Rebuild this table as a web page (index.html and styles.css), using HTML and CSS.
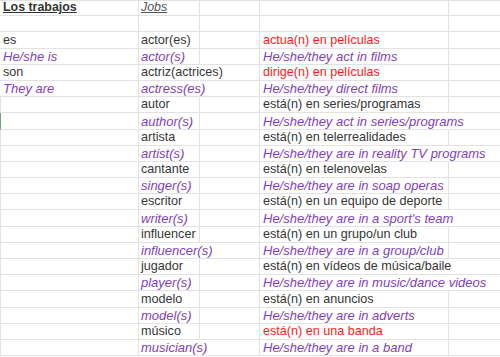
FILE: index.html
```html
<!DOCTYPE html>
<html>
<head>
<meta charset="utf-8">
<link rel="stylesheet" href="styles.css">
</head>
<body>
<div class="sheet">
  <div class="c a top"><span class="title">Los trabajos</span></div><div class="c b top"><span class="sub">Jobs</span></div><div class="c top"></div><div class="c d top"></div><div class="c e top"></div>

  <div class="c a"></div><div class="c b"></div><div class="c"></div><div class="c d"></div><div class="c e"></div>

  <div class="c a">es</div><div class="c b">actor(es)</div><div class="c"></div><div class="c d r">actua(n) en películas</div><div class="c e"></div>
  <div class="c a p">He/she is</div><div class="c b p">actor(s)</div><div class="c"></div><div class="c d p">He/she/they act in films</div><div class="c e"></div>
  <div class="c a">son</div><div class="c b sp">actriz(actrices)</div><div class="c"></div><div class="c d r">dirige(n) en películas</div><div class="c e"></div>
  <div class="c a p">They are</div><div class="c b p sp">actress(es)</div><div class="c"></div><div class="c d p">He/she/they direct films</div><div class="c e"></div>

  <div class="c a edge"></div><div class="c b">autor</div><div class="c"></div><div class="c d">está(n) en series/programas</div><div class="c e"></div>
  <div class="c a edge sel"></div><div class="c b p">author(s)</div><div class="c"></div><div class="c d p sp">He/she/they act in series/programs</div><div class="c e"></div>
  <div class="c a edge"></div><div class="c b">artista</div><div class="c"></div><div class="c d">está(n) en telerrealidades</div><div class="c e"></div>
  <div class="c a edge"></div><div class="c b p">artist(s)</div><div class="c"></div><div class="c d p sp">He/she/they are in reality TV programs</div><div class="c e"></div>
  <div class="c a edge"></div><div class="c b">cantante</div><div class="c"></div><div class="c d">está(n) en telenovelas</div><div class="c e"></div>
  <div class="c a edge"></div><div class="c b p">singer(s)</div><div class="c"></div><div class="c d p">He/she/they are in soap operas</div><div class="c e"></div>
  <div class="c a edge"></div><div class="c b">escritor</div><div class="c"></div><div class="c d">está(n) en un equipo de deporte</div><div class="c e"></div>
  <div class="c a edge"></div><div class="c b p">writer(s)</div><div class="c"></div><div class="c d p sp">He/she/they are in a sport's team</div><div class="c e"></div>
  <div class="c a edge"></div><div class="c b">influencer</div><div class="c"></div><div class="c d">está(n) en un grupo/un club</div><div class="c e"></div>
  <div class="c a edge"></div><div class="c b p sp">influencer(s)</div><div class="c"></div><div class="c d p">He/she/they are in a group/club</div><div class="c e"></div>
  <div class="c a edge"></div><div class="c b">jugador</div><div class="c"></div><div class="c d sp">está(n) en vídeos de música/baile</div><div class="c e"></div>
  <div class="c a edge"></div><div class="c b p">player(s)</div><div class="c"></div><div class="c d p sp">He/she/they are in music/dance videos</div><div class="c e"></div>
  <div class="c a edge"></div><div class="c b">modelo</div><div class="c"></div><div class="c d">está(n) en anuncios</div><div class="c e"></div>
  <div class="c a edge"></div><div class="c b p">model(s)</div><div class="c"></div><div class="c d p">He/she/they are in adverts</div><div class="c e"></div>
  <div class="c a edge"></div><div class="c b">músico</div><div class="c"></div><div class="c d r">está(n) en una banda</div><div class="c e"></div>
  <div class="c a edge"></div><div class="c b p sp">musician(s)</div><div class="c"></div><div class="c d p">He/she/they are in a band</div><div class="c e"></div>
</div>
</body>
</html>
```

FILE: styles.css
```css
html, body {
  margin: 0;
  padding: 0;
  background: #ffffff;
}

.sheet {
  display: grid;
  grid-template-columns: 139px 61px 60px 189px 51px;
  grid-auto-rows: 16.2px;
  width: 500px;
  overflow: hidden;
  font-family: "Liberation Sans", Arial, sans-serif;
  font-size: 12.6px;
  color: #363636;
}

.c {
  box-sizing: border-box;
  border-right: 1px solid #e2e2e2;
  border-bottom: 1px solid #e2e2e2;
  padding: 0 0 0 2px;
  white-space: nowrap;
  overflow: visible;
  display: flex;
  align-items: flex-end;
  line-height: 15px;
}

.a { padding-left: 3px; }
.d { padding-left: 3px; }
.e { border-right: none; }

.top { box-shadow: inset 0 1px 0 #e2e2e2; }

.sp { border-right-color: transparent; }

.edge { border-left: 1px solid #e2e2e2; }
.sel { border-left-color: #6aa87e; }

.title {
  font-size: 12.4px;
  font-weight: bold;
  text-decoration: underline;
  color: #333333;
}

.sub {
  font-size: 12.4px;
  font-style: italic;
  text-decoration: underline;
  color: #555555;
}

.r { color: #ff1a1a; }

.p {
  font-style: italic;
  font-size: 13px;
  color: #7f3fbd;
}
```
